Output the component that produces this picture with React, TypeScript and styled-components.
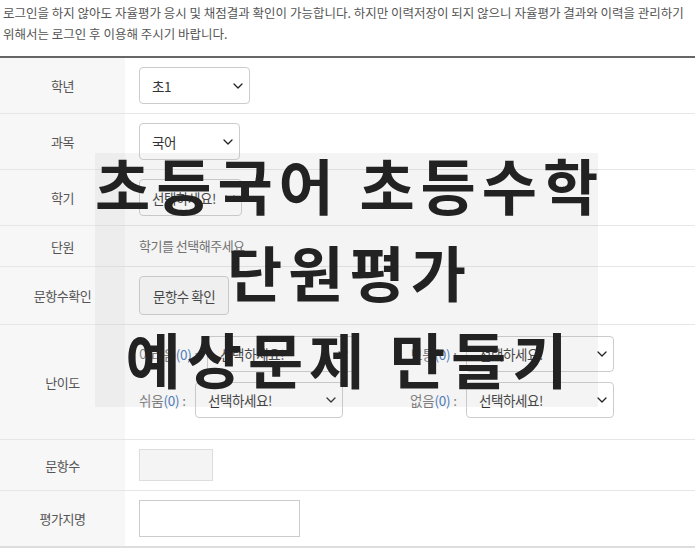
import React from "react";
import styled, { createGlobalStyle } from "styled-components";

const GlobalStyle = createGlobalStyle`
  html, body { margin: 0; padding: 0; background: #fff; }
  body { font-family: "Noto Sans CJK KR", "Noto Sans", sans-serif; }
  * { box-sizing: border-box; }
`;

const Page = styled.div`
  position: relative;
  width: 695px;
  padding-top: 2px;
`;

const Intro = styled.p`
  margin: 0 0 12px 3px;
  font-size: 12.5px;
  line-height: 21px;
  letter-spacing: 0;
  color: #555;
  white-space: nowrap;
`;

const Table = styled.div`
  display: grid;
  grid-template-columns: 125px 1fr;
  border-top: 2px solid #666;
  border-bottom: 2px solid #ddd;
`;

const Label = styled.div`
  display: flex;
  align-items: center;
  justify-content: center;
  background: #f7f7f7;
  border-bottom: 1px solid #e6e6e6;
  font-size: 13px;
  letter-spacing: -0.5px;
  color: #555;
  &:nth-last-child(2) { border-bottom: none; }
`;

const Cell = styled.div<{ $pt?: number; $pb?: number }>`
  display: flex;
  align-items: center;
  padding: ${(p) => p.$pt ?? 9}px 14px ${(p) => p.$pb ?? 9}px;
  border-bottom: 1px solid #e6e6e6;
  &:last-child { border-bottom: none; }
`;

const SelectWrap = styled.div<{ $w: number; $h?: number }>`
  position: relative;
  display: flex;
  align-items: center;
  flex-shrink: 0;
  width: ${(p) => p.$w}px;
  height: ${(p) => p.$h ?? 37}px;
  padding: 0 12px;
  border: 1px solid #ccc;
  border-radius: 4px;
  background: #fff;
  font-size: 13.5px;
  letter-spacing: -0.4px;
  color: #333;
`;

const Chevron = styled.svg`
  position: absolute;
  right: 6px;
  top: 50%;
  width: 10px;
  height: 6px;
  margin-top: -3px;
`;

const Select: React.FC<{ w: number; h?: number; children: React.ReactNode }> = ({ w, h, children }) => (
  <SelectWrap $w={w} $h={h}>
    {children}
    <Chevron viewBox="0 0 10 6" fill="none">
      <path d="M1 1l4 4 4-4" stroke="#222" strokeWidth="1.3" strokeLinecap="round" strokeLinejoin="round" />
    </Chevron>
  </SelectWrap>
);

const Hint = styled.span`
  font-size: 13px;
  line-height: 22px;
  letter-spacing: -0.5px;
  color: #666;
`;

const Button = styled.button`
  height: 39px;
  padding: 0 13px;
  border: 1px solid #ccc;
  border-radius: 4px;
  background: #fafafa;
  font-family: inherit;
  font-size: 13.5px;
  letter-spacing: -0.5px;
  color: #333;
`;

const DiffGrid = styled.div`
  display: grid;
  grid-template-columns: 1fr 1fr;
  row-gap: 10px;
  width: 100%;
`;

const DiffItem = styled.div`
  display: flex;
  align-items: center;
  gap: 9px;
`;

const DiffLabel = styled.span`
  font-size: 13.5px;
  letter-spacing: -0.2px;
  color: #777;
  white-space: nowrap;
`;

const Count = styled.span`
  color: #3b72b8;
`;

const TextInput = styled.div<{ $w: number; $h: number; $disabled?: boolean }>`
  width: ${(p) => p.$w}px;
  height: ${(p) => p.$h}px;
  border: 1px solid ${(p) => (p.$disabled ? "#ddd" : "#ccc")};
  background: ${(p) => (p.$disabled ? "#f4f4f4" : "#fff")};
`;

const Overlay = styled.div`
  position: absolute;
  left: 95px;
  top: 153px;
  width: 503px;
  height: 254px;
  background: rgba(180, 180, 180, 0.15);
  text-align: center;
  font-size: 60px;
  font-weight: 700;
  line-height: 87px;
  letter-spacing: 6px;
  color: #222;
  white-space: nowrap;
`;

const OverlayText = styled.div`
  margin-top: -13px;
  margin-right: -6px;
`;

const levels = [
  { name: "어려움" },
  { name: "보통" },
  { name: "쉬움" },
  { name: "없음" },
];

export default function App() {
  return (
    <>
      <GlobalStyle />
      <Page>
        <Intro>
          로그인을 하지 않아도 자율평가 응시 및 채점결과 확인이 가능합니다. 하지만 이력저장이 되지 않으니 자율평가 결과와 이력을 관리하기
          <br />
          위해서는 로그인 후 이용해 주시기 바랍니다.
        </Intro>
        <Table>
          <Label>학년</Label>
          <Cell>
            <Select w={111}>초1</Select>
          </Cell>
          <Label>과목</Label>
          <Cell>
            <Select w={101}>국어</Select>
          </Cell>
          <Label>학기</Label>
          <Cell>
            <Select w={103}>선택하세요!</Select>
          </Cell>
          <Label>단원</Label>
          <Cell>
            <Hint>학기를 선택해주세요</Hint>
          </Cell>
          <Label>문항수확인</Label>
          <Cell>
            <Button>문항수 확인</Button>
          </Cell>
          <Label>난이도</Label>
          <Cell $pt={11} $pb={21}>
            <DiffGrid>
              {levels.map((l) => (
                <DiffItem key={l.name}>
                  <DiffLabel>
                    {l.name}
                    <Count>(0)</Count> :
                  </DiffLabel>
                  <Select w={148} h={36}>
                    선택하세요!
                  </Select>
                </DiffItem>
              ))}
            </DiffGrid>
          </Cell>
          <Label>문항수</Label>
          <Cell>
            <TextInput $w={74} $h={32} $disabled />
          </Cell>
          <Label>평가지명</Label>
          <Cell>
            <TextInput $w={161} $h={37} />
          </Cell>
        </Table>
        <Overlay>
          <OverlayText>
            초등국어 초등수학
            <br />
            단원평가
            <br />
            예상문제 만들기
          </OverlayText>
        </Overlay>
      </Page>
    </>
  );
}
